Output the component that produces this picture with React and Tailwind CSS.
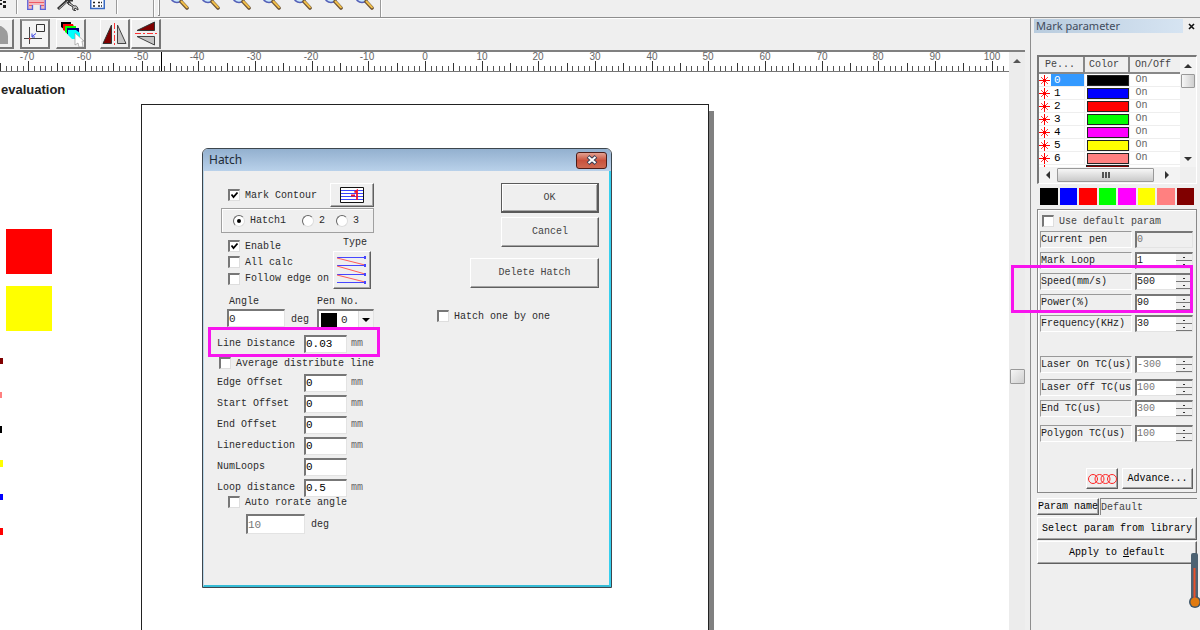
import React from 'react';
import clsx from 'clsx';

const pens = [
  { no: 0, color: 'bg-black' },
  { no: 1, color: 'bg-[#0000ff]' },
  { no: 2, color: 'bg-[#ff0000]' },
  { no: 3, color: 'bg-[#00ff00]' },
  { no: 4, color: 'bg-[#ff00ff]' },
  { no: 5, color: 'bg-[#ffff00]' },
  { no: 6, color: 'bg-[#ff8080]' },
  { no: 7, color: 'bg-[#800000]' },
];

const offsetRows = [
  { id: 'edge', label: 'Edge Offset', value: '0', unit: 'mm' },
  { id: 'start', label: 'Start Offset', value: '0', unit: 'mm' },
  { id: 'end', label: 'End Offset', value: '0', unit: 'mm' },
  { id: 'reduction', label: 'Linereduction', value: '0', unit: 'mm' },
  { id: 'loops', label: 'NumLoops', value: '0', unit: '' },
  { id: 'loopdist', label: 'Loop distance', value: '0.5', unit: 'mm' },
];

const raised = 'bg-[#efefef] border border-t-white border-l-white border-r-[#5f5f5f] border-b-[#5f5f5f] shadow-[inset_-1px_-1px_0_#a5a5a5]';
const sunken = 'border-t-2 border-l-2 border-r border-b border-t-[#777] border-l-[#777] border-r-[#e3e3e3] border-b-[#e3e3e3]';

const Checkbox = ({ label, checked, className }) => (
  <label className={clsx('flex items-center gap-[5px] whitespace-pre', className)}>
    <span className="relative block w-3 h-3 shrink-0">
      <input
        type="checkbox"
        defaultChecked={checked}
        className="peer block appearance-none w-3 h-3 bg-white border-t-2 border-l-2 border-r border-b border-t-[#777] border-l-[#777] border-r-[#dedede] border-b-[#dedede]"
      />
      <svg viewBox="0 0 12 12" className="absolute inset-0 w-3 h-3 hidden peer-checked:block pointer-events-none">
        <path d="M3.5 5.5l2 2.5 4-4.5" fill="none" stroke="#000" strokeWidth="1.8" />
      </svg>
    </span>
    <span className="pt-px">{label}</span>
  </label>
);

const Radio = ({ label, checked, className }) => (
  <label className={clsx('flex items-center gap-[5px]', className)}>
    <span className="relative block w-3 h-3 shrink-0">
      <input
        type="radio"
        name="hatch"
        defaultChecked={checked}
        className="peer block appearance-none w-3 h-3 rounded-full bg-white border border-t-[#666] border-l-[#666] border-r-[#ddd] border-b-[#ddd]"
      />
      <span className="absolute left-1 top-1 w-1 h-1 rounded-full bg-black hidden peer-checked:block" />
    </span>
    {label}
  </label>
);

const Arrow = ({ dir, className }) => {
  const paths = { up: 'M0 6L4 2l4 4z', down: 'M0 2l4 4 4-4z', left: 'M6 0L2 4l4 4z', right: 'M2 0l4 4-4 4z' };
  return (
    <svg viewBox="0 0 8 8" className={clsx('w-2 h-2 fill-[#333]', className)}>
      <path d={paths[dir]} />
    </svg>
  );
};

const Separator = ({ className }) => <div className={clsx('w-[2px] border-l border-[#9a9a9a] bg-white', className)} />;

const Magnifier = () => (
  <svg viewBox="0 0 20 10" className="w-5 h-[10px]">
    <circle cx="8" cy="-4" r="6.500" fill="#c9e8fb" stroke="#5560b8" strokeWidth="1.500" />
    <path d="M12 1.500L18 8" stroke="#6f5535" strokeWidth="3.600" strokeLinecap="round" />
    <path d="M12.500 1.500L18 7.300" stroke="#f3c04a" strokeWidth="1.900" strokeLinecap="round" />
  </svg>
);

const TopToolbar = () => (
  <header className="flex h-[18px] shrink-0 items-start border-b border-[#8e8e8e] bg-[#efefef]">
    <svg viewBox="0 0 16 10" className="w-4 h-[10px]">
      <path d="M0 3h2v2H0zM3 1h3v2H3zM3 5h3v3H3zM0 0h2v1H0z" fill="#222" />
    </svg>
    <Separator className="h-[14px]" />
    <svg viewBox="0 0 20 10" className="w-5 h-[10px] ml-[9px]">
      <path d="M0 0h19v10h-5V5H5v5H0z" fill="#f3b9bd" />
      <path d="M2 2.500h15M2 5.500h4M13 5.500h4" stroke="#ee5a64" />
      <path d="M.75 0v9.500M18.250 0v9.500M5.500 10V5M13.500 10V5M0 9.500h6M13 9.500h6" stroke="#5a64dc" strokeWidth="1.300" />
    </svg>
    <svg viewBox="0 0 24 11" className="w-6 h-[11px] ml-[9px]">
      <path d="M12 0L2 9M9 0h8M11 1l3 3" fill="none" stroke="#333" strokeWidth="3" />
      <path d="M12 1L3 8.500" stroke="#b5b5b5" />
      <path d="M13 2l5 4c2-1 4 1 4 4l-3-2-1 2 2 1c-3 0-4-2-3-4l-5-3z" fill="#ccc" stroke="#333" />
    </svg>
    <svg viewBox="0 0 16 10" className="w-4 h-[10px] ml-[10px]">
      <path d="M.75 -2h13.500V8.500H.75z" fill="#fff" stroke="#3a6cc4" strokeWidth="1.500" />
      <path d="M3 2.500h3M3 6h3M8 2.500h4M8 6h4" stroke="#222" strokeWidth="1.500" strokeDasharray="2 1" />
    </svg>
    <Separator className="h-[14px] ml-[10px]" />
    <Separator className="h-[17px] ml-[35px]" />
    <div className="ml-[3px] w-[2px] h-4 border-r border-b border-[#8e8e8e] bg-white" />
    <div className="ml-[9px] w-[205px] flex justify-between">
      {pens.slice(0, 7).map((p) => <Magnifier key={p.no} />)}
    </div>
    <Separator className="h-[17px] ml-[6px]" />
  </header>
);

const ToolButton = ({ label, pressed, className, children }) => (
  <button
    aria-label={label}
    className={clsx(
      'h-[30px] w-[30px] shrink-0 overflow-hidden',
      pressed
        ? 'bg-[#f4f4f4] border-2 border-[#777] border-t-[#999]'
        : 'bg-[#efefef] border-t border-l border-r-2 border-b-2 border-t-white border-l-white border-r-[#777] border-b-[#777]',
      className
    )}
  >
    {children}
  </button>
);

const DrawToolbar = () => (
  <div className="flex h-[32px] shrink-0 items-start border-t border-white bg-[#efefef]">
    <div className="w-[14px] h-[30px] flex overflow-hidden justify-end">
      <ToolButton label="Shape">
        <svg viewBox="0 0 27 27" className="w-full h-full">
          <path d="M10 6h6q7 4 7 10v8H10z" fill="#9b9b9b" />
        </svg>
      </ToolButton>
    </div>
    <ToolButton label="Put to origin" pressed className="ml-[6px]">
      <svg viewBox="0 0 26 26" className="w-full h-full">
        <path d="M7.500 6v17M2 17.500h18" stroke="#444" />
        <path d="M14.500 3.500h8v7h-8z" fill="none" stroke="#333" />
        <path d="M14 12.500L10 15.500M10 12.500V16h3" fill="none" stroke="#3b45e0" />
        <path d="M7 17h1.500v1.500H7z" fill="#e33" />
      </svg>
    </ToolButton>
    <ToolButton label="Layers" className="ml-[6px]">
      <svg viewBox="0 0 27 27" className="w-full h-full">
        <path d="M4 2h10v4l2 4H8L4 7z" fill="#000" />
        <path d="M6 4h10l2 6-8 2-4-2z" fill="#f00" />
        <path d="M8 6h11v7l-7 2-4-3z" fill="#0f0" />
        <path d="M10 8h12v7h-8l-4-1z" fill="#00007a" />
        <path d="M11 10h8l4 3v6h-8l-4-4z" fill="#0ff" />
        <path d="M18 13v12l3-2 1 4h4l-1-6h2z" fill="#fff" stroke="#999" strokeWidth=".7" />
      </svg>
    </ToolButton>
    <ToolButton label="Mirror horizontally" className="ml-[14px]">
      <svg viewBox="0 0 27 27" className="w-full h-full">
        <path d="M10.500 5v18.500H2z" fill="#800000" stroke="#333" />
        <path d="M16.500 5v18.500H25z" fill="#c4c4c4" stroke="#444" />
        <path d="M13.500 3v22" stroke="#f33" strokeDasharray="6 2 2 2" />
      </svg>
    </ToolButton>
    <ToolButton label="Mirror vertically" className="ml-px">
      <svg viewBox="0 0 27 27" className="w-full h-full">
        <path d="M22.500 2v8.500H5z" fill="#800000" stroke="#333" />
        <path d="M22.500 25v-8.500H5z" fill="#c4c4c4" stroke="#444" />
        <path d="M3 13.500h22" stroke="#f33" strokeDasharray="6 2 2 2" />
      </svg>
    </ToolButton>
  </div>
);

const Ruler = () => {
  const origin = 425;
  const unit = 5.667;
  const ticks = [];
  for (let i = -75; i <= 102; i++) ticks.push(i);
  return (
    <svg className="block w-full h-[20px] shrink-0 overflow-hidden bg-white border-b border-[#777]">
      {ticks.map((i) => {
        const x = Math.round(origin + i * unit) + 0.5;
        const top = i % 10 === 0 ? 9 : i % 5 === 0 ? 11 : 14;
        return <line key={i} x1={x} x2={x} y1={top} y2="19" stroke={i % 5 === 0 ? '#333' : '#555'} />;
      })}
      {ticks.filter((i) => i % 10 === 0).map((i) => (
        <text
          key={i}
          x={Math.round(origin + i * unit) - (i < 0 ? 1 : 0)}
          y="8"
          textAnchor="middle"
          className="text-[10px] fill-[#666] font-['Liberation_Sans',sans-serif]"
        >
          {i}
        </text>
      ))}
      <line x1="161.5" x2="161.5" y1="0" y2="19" stroke="#000" />
    </svg>
  );
};

/* Shapes that sit on the drawing area, left of the work sheet */
const Canvas = () => (
  <div className="relative flex-1 overflow-hidden bg-white">
    <div className="absolute left-px top-[10px] text-[13px] leading-4 font-bold text-[#222] font-['Liberation_Sans',sans-serif]">evaluation</div>
    <div className="absolute left-[709px] top-[39px] bottom-0 w-[5px] bg-[#808080]" />
    <div className="absolute left-[141px] top-[32px] bottom-0 w-[568px] border border-b-0 border-[#222] bg-white" />
    <div className="absolute left-[6px] top-[157px] w-[46px] h-[45px] bg-[#ff0000]" />
    <div className="absolute left-[6px] top-[214px] w-[46px] h-[45px] bg-[#ffff00]" />
    <div className="absolute left-0 top-[286px] w-[3px] h-[6px] bg-[#800000]" />
    <div className="absolute left-0 top-[320px] w-[2px] h-[6px] bg-[#ff8080]" />
    <div className="absolute left-0 top-[354px] w-[2px] h-[7px] bg-black" />
    <div className="absolute left-0 top-[388px] w-[3px] h-[7px] bg-[#ffff00]" />
    <div className="absolute left-0 top-[422px] w-[3px] h-[6px] bg-[#0000ff]" />
    <div className="absolute left-0 top-[456px] w-[3px] h-[7px] bg-[#ff0000]" />
  </div>
);

const DialogButton = ({ className, children }) => (
  <button className={clsx('h-[30px] text-[#444]', className)}>{children}</button>
);

const DistanceRow = ({ row }) => (
  <div className="flex h-[21px] items-center">
    <label htmlFor={row.id} className="w-[87px] pt-px">{row.label}</label>
    <input id={row.id} defaultValue={row.value} className={clsx('w-[43px] h-[18px] bg-white text-[11px] text-black outline-none', sunken)} />
    <span className="ml-1 pt-px text-[#666]">{row.unit}</span>
  </div>
);

const HatchDialog = () => (
  <section
    role="dialog"
    aria-label="Hatch"
    className="absolute left-[202px] top-[148px] w-[410px] rounded-t-md overflow-hidden border border-[#3d464d] bg-[#efefef] font-['Liberation_Mono',monospace] text-[10px] leading-3 text-[#2b2b2b]"
  >
    <div className="flex h-[22px] items-center justify-between bg-linear-to-b from-[#93b0cf] to-[#b9d1ea] pl-[6px] pr-1">
      <h2 className="text-[12px] text-[#1e2a36] font-['Noto_Sans',sans-serif]">Hatch</h2>
      <button aria-label="Close" className="w-[31px] h-[17px] flex items-center justify-center rounded-[3px] border border-[#4d1c17] bg-linear-to-b from-[#e2a192] via-[#c9513c] via-50% to-[#cf6a52]">
        <svg viewBox="0 0 12 10" className="w-3 h-[10px]">
          <path d="M2 1.500l8 7M10 1.500l-8 7" stroke="#3a3f55" strokeWidth="4" />
          <path d="M2.500 2l7 6M9.500 2l-7 6" stroke="#fff" strokeWidth="2" />
        </svg>
      </button>
    </div>

    <div className="flex justify-between border-l border-l-[#bcd8ea] border-r-2 border-b-2 border-r-[#35cfee] border-b-[#35bcd6] pl-[13px] pr-[10px] pt-3 pb-[51px]">
      <div className="w-[157px] whitespace-nowrap">
        <div className="flex h-6 items-center justify-between pl-[11px]">
          <Checkbox label="Mark Contour" checked />
          <button aria-label="Contour mode" className={clsx('w-[44px] h-6 flex items-center justify-center', raised)}>
            <svg viewBox="0 0 24 16" className="w-6 h-4">
              <path d="M.5.5h23v15H.5z" fill="#fff" stroke="#111" />
              <path d="M1 3.500h22M1 6.500h22M1 9.500h22M1 12.500h22" stroke="#3a46ff" />
              <path d="M11 8.500h4M14.500 5.500l2.500-2v9.500" fill="none" stroke="#f01030" strokeWidth="1.800" />
            </svg>
          </button>
        </div>

        <div role="radiogroup" aria-label="Hatch number" className="mt-px ml-1 flex h-[25px] items-center border border-[#a0a0a0] pl-[11px] shadow-[inset_1px_1px_0_#fff]">
          <Radio label="Hatch1" checked />
          <Radio label="2" className="ml-4" />
          <Radio label="3" className="ml-[11px]" />
        </div>

        <div className="mt-[3px] flex justify-between pl-[11px] pr-[3px]">
          <div className="pt-[2px]">
            <Checkbox label="Enable" checked className="h-4" />
            <Checkbox label="All calc" className="h-4" />
            <Checkbox label="Follow edge on" className="h-[17px]" />
          </div>
          <div className="w-[38px]">
            <div className="h-[15px] pl-[10px] pt-px">Type</div>
            <button aria-label="Hatch type" className={clsx('w-[38px] h-[38px] flex items-center justify-center', raised)}>
              <svg viewBox="0 0 32 30" className="w-8 h-[30px]">
                <path d="M1 2.500h29M1 10.500h29M1 19.500h29M1 27.500h29" stroke="#4646ff" />
                <path d="M1 3l28 7M1 11l28 8M1 20l28 7" stroke="#ff5a5a" />
                <path d="M28 1h2v3h-2zM28 9h2v3h-2zM28 18h2v3h-2zM28 26h2v3h-2z" fill="#4646ff" />
              </svg>
            </button>
          </div>
        </div>

        <div className="mt-1 flex items-start pl-[10px]">
          <div className="w-[58px]">
            <label htmlFor="angle" className="flex h-4 items-center pl-[2px] pt-px">Angle</label>
            <input id="angle" defaultValue="0" className={clsx('block w-full h-[18px] bg-white text-[11px] outline-none', sunken)} />
          </div>
          <span className="ml-[6px] mt-[21px] w-[26px]">deg</span>
          <div className="w-[57px]">
            <label htmlFor="pen" className="flex h-4 items-center pt-px">Pen No.</label>
            <div className="relative">
              <select id="pen" className={clsx('block appearance-none w-full h-5 bg-white pl-[22px] text-[11px] outline-none', sunken)}>
                <option>0</option>
              </select>
              <span className="absolute left-1 top-1 w-4 h-[14px] bg-black pointer-events-none" />
              <span className="absolute right-px top-[2px] flex w-[15px] h-[17px] items-center justify-center bg-[#f4f4f4] border-l border-[#ddd] pointer-events-none">
                <Arrow dir="down" className="fill-black" />
              </span>
            </div>
          </div>
        </div>

        <div className="relative mt-1">
          <DistanceRow row={{ id: 'linedist', label: 'Line Distance', value: '0.03', unit: 'mm' }} />
          <Checkbox label="Average distribute line" className="h-[18px] pl-[2px]" />
          <div className="absolute -left-[9px] -right-[6px] -top-[6px] h-[30px] border-3 border-[#f814ee] pointer-events-none" />
        </div>

        {offsetRows.map((row) => <DistanceRow key={row.id} row={row} />)}

        <Checkbox label="Auto rorate angle" className="h-4 -mt-1 pl-[11px]" />
        <div className="mt-1 flex items-center pl-[29px]">
          <input aria-label="Auto rorate angle value" defaultValue="10" className={clsx('w-[59px] h-5 bg-white text-[11px] text-[#777] outline-none', sunken)} />
          <span className="ml-[6px] pt-[2px]">deg</span>
        </div>
      </div>

      <div className="flex w-[162px] flex-col items-end">
        <DialogButton className="w-[98px] bg-[#efefef] border border-r-2 border-b-2 border-[#5a5a5a] shadow-[inset_1px_1px_0_#fff,inset_-1px_-1px_0_#aaa]">OK</DialogButton>
        <DialogButton className={clsx('mt-1 w-[98px]', raised)}>Cancel</DialogButton>
        <DialogButton className={clsx('mt-[11px] w-[129px]', raised)}>Delete Hatch</DialogButton>
        <Checkbox label="Hatch one by one" className="mt-5 h-4 self-start" />
      </div>
    </div>
  </section>
);

const PenStar = () => (
  <svg viewBox="0 0 11 11" className="w-[11px] h-[11px]">
    <path d="M5.500 0v11M0 5.500h11" stroke="#f00" />
    <path d="M2 2l7 7M9 2l-7 7" stroke="#f44" />
    <path d="M4 4h3v3H4z" fill="#f00" />
  </svg>
);

const PenList = () => (
  <div className="border-t-2 border-l-2 border-r border-b border-t-[#777] border-l-[#777] border-r-white border-b-white bg-[#efefef]">
    <div className="flex h-[110px]">
      <div className="flex-1 overflow-hidden bg-white">
        <table className="w-full table-fixed border-collapse text-[#444]">
          <thead>
            <tr className="h-4 bg-[#efefef] text-left">
              <th className="w-[45px] h-4 border-r-2 border-b-2 border-[#888] p-0 pl-[6px] font-normal">Pe...</th>
              <th className="w-[45px] border-r-2 border-b-2 border-[#888] p-0 pl-1 font-normal">Color</th>
              <th className="border-b-2 border-[#888] p-0 pl-[5px] font-normal">On/Off</th>
            </tr>
          </thead>
          <tbody>
            {pens.slice(0, 7).map((pen) => (
              <tr key={pen.no} className="h-[13px]">
                <td className="h-[13px] border-r border-b border-[#eee] p-0">
                  <div className="flex h-3 items-center">
                    <PenStar />
                    <span className={clsx('ml-px flex-1 h-3 pl-[3px] text-[11px]', pen.no === 0 ? 'bg-[#3399ff] text-white' : 'text-black')}>{pen.no}</span>
                  </div>
                </td>
                <td className="border-r border-b border-[#eee] p-0 pl-[2px]">
                  <div className={clsx('h-[11px] border border-[#222]', pen.color)} />
                </td>
                <td className="border-b border-[#eee] p-0 pl-[6px] text-[#666]">On</td>
              </tr>
            ))}
          </tbody>
        </table>
        {/* top edge of the next row */}
        <div className="flex">
          <div className="w-[47px]"><PenStar /></div>
          <div className="w-[43px] h-[11px] border border-[#222] bg-[#800000]" />
        </div>
      </div>
      <div className="flex w-4 flex-col items-center bg-[#f3f3f3]">
        <div className="flex h-[17px] items-center"><Arrow dir="up" /></div>
        <div className="w-[14px] h-[14px] border border-[#999] rounded-[1px] bg-linear-to-r from-[#f6f6f6] to-[#cfcfcf]" />
        <div className="mt-auto flex h-[17px] items-center"><Arrow dir="down" /></div>
      </div>
    </div>
    <div className="mr-4 flex h-4 items-center bg-[#f3f3f3]">
      <div className="flex w-[18px] justify-center"><Arrow dir="left" /></div>
      <div className="flex h-[14px] flex-1 items-center justify-center gap-px rounded-[1px] border border-[#999] bg-linear-to-b from-[#f6f6f6] to-[#cacaca]">
        <span className="w-[2px] h-[6px] bg-[#555]" />
        <span className="w-[2px] h-[6px] bg-[#555]" />
        <span className="w-[2px] h-[6px] bg-[#555]" />
      </div>
      <div className="flex w-[26px] justify-center"><Arrow dir="right" /></div>
    </div>
  </div>
);

const ParamRow = ({ id, label, value, readOnly, muted, className }) => (
  <div className={clsx('flex h-[17px] gap-[3px]', className)}>
    <label htmlFor={id} className="w-[92px] h-[17px] shrink-0 flex items-center whitespace-nowrap border border-t-[#999] border-l-[#999] border-r-white border-b-white pt-px text-[#222]">
      {label}
    </label>
    <div className={clsx('flex min-w-0 flex-1', sunken, readOnly ? 'bg-[#efefef]' : 'bg-white')}>
      <input id={id} defaultValue={value} readOnly={readOnly} className={clsx('w-0 min-w-0 flex-1 bg-transparent outline-none', muted ? 'text-[#777]' : 'text-[#222]')} />
      {!readOnly && (
        <div className="flex w-4 shrink-0 flex-col">
          <button aria-label={`${label} up`} className="flex flex-1 items-center justify-center bg-[#efefef] border-b border-[#777]"><span className="w-[2px] h-px bg-[#333]" /></button>
          <button aria-label={`${label} down`} className="flex flex-1 items-center justify-center bg-[#efefef] border-b border-[#777]"><span className="w-[2px] h-px bg-[#333]" /></button>
        </div>
      )}
    </div>
  </div>
);

const MarkParameterPanel = () => (
  <aside className="w-[170px] shrink-0 border-l border-[#8e8e8e] bg-[#efefef] font-['Liberation_Mono',monospace] text-[10px] leading-3">
    <div className="flex items-center pl-[3px] pt-px">
      <h2 className="h-[14px] w-[149px] bg-linear-to-r from-[#b9ccde] to-[#d6e4f2] pl-[2px] text-[11px] leading-[14px] text-[#3f4b5c] font-['Noto_Sans',sans-serif]">Mark parameter</h2>
      <button aria-label="Close panel" className="flex flex-1 justify-center">
        <svg viewBox="0 0 7 7" className="w-[7px] h-[7px]">
          <path d="M1 1l5 5M6 1L1 6" stroke="#111" strokeWidth="1.600" />
        </svg>
      </button>
    </div>

    <div className="pl-[6px] pr-[3px] pt-[22px]">
      <PenList />

      <div className="mt-1 flex gap-[2px] px-[3px]">
        {pens.map((pen) => (
          <button key={pen.no} aria-label={`Pen ${pen.no}`} className={clsx('h-[17px] flex-1', pen.color)} />
        ))}
      </div>

      {/* Speed and Power rows are marked with the pink frame */}
      <div className="relative mt-1 border border-[#888] shadow-[inset_1px_1px_0_#fff] pl-[2px] pr-[3px] pt-px pb-[3px]">
        <Checkbox label="Use default param" className="h-5 pl-[2px] text-[#444]" />
        <div className="flex flex-col gap-1">
          <ParamRow id="current" label="Current pen" value="0" readOnly muted />
          <ParamRow id="loop" label="Mark Loop" value="1" />
          <ParamRow id="speed" label="Speed(mm/s)" value="500" />
          <ParamRow id="power" label="Power(%)" value="90" />
          <ParamRow id="freq" label="Frequency(KHz)" value="30" />
          <ParamRow id="laseron" label="Laser On TC(us)" value="-300" muted className="mt-5" />
          <ParamRow id="laseroff" label="Laser Off TC(us" value="100" muted className="mt-[2px]" />
          <ParamRow id="endtc" label="End TC(us)" value="300" muted />
          <ParamRow id="polytc" label="Polygon TC(us)" value="100" muted className="mt-1" />
        </div>
        <div className="mt-[26px] flex justify-end gap-1">
          <button aria-label="Wobble" className={clsx('w-8 h-[21px] flex items-center justify-center', raised)}>
            <svg viewBox="0 0 29 12" className="w-[29px] h-3">
              <g fill="none" stroke="#f22">
                <circle cx="5" cy="6" r="4.500" />
                <circle cx="11.500" cy="6" r="4.500" />
                <circle cx="17.500" cy="6" r="4.500" />
                <circle cx="24" cy="6" r="4.500" />
              </g>
            </svg>
          </button>
          <button className={clsx('w-[71px] h-[21px]', raised)}>Advance...</button>
        </div>
        <div className="absolute -left-[27px] right-[3px] top-[55px] h-[48px] border-3 border-[#f814ee] pointer-events-none" />
      </div>

      <div className="mt-[5px] flex gap-px">
        <button className={clsx('w-[62px] h-[17px] whitespace-nowrap', raised)}>Param name</button>
        <input aria-label="Param name value" defaultValue="Default" className="min-w-0 flex-1 h-[17px] bg-[#efefef] border-t border-l border-[#888] text-[#444] outline-none" />
      </div>
      <button className={clsx('mt-[2px] w-full h-[23px] whitespace-nowrap', raised)}>Select param from library</button>
      <button className={clsx('mt-px block w-full h-[23px]', raised)}>Apply to <u>d</u>efault</button>
    </div>
  </aside>
);

const MainScrollbar = () => (
  <div className="flex w-4 shrink-0 flex-col items-center bg-[#ececec]">
    <div className="flex h-[17px] items-center"><Arrow dir="up" className="fill-[#555]" /></div>
    <div className="grow-[11]" />
    <div className="w-[15px] h-[15px] border border-[#999] rounded-[1px] bg-linear-to-br from-[#f6f6f6] to-[#cfcfcf]" />
    <div className="grow-[9]" />
  </div>
);

const App = () => (
  <div className="relative flex h-screen flex-col overflow-hidden bg-[#efefef]">
    <TopToolbar />
    <div className="flex min-h-0 flex-1">
      <main className="flex min-w-0 flex-1 flex-col">
        <DrawToolbar />
        <div className="mr-[5px] flex min-h-0 flex-1 border-t-2 border-[#808080]">
          <div className="flex min-w-0 flex-1 flex-col">
            <Ruler />
            <Canvas />
          </div>
          <MainScrollbar />
        </div>
      </main>
      <MarkParameterPanel />
    </div>

    <HatchDialog />

    <svg viewBox="0 0 12 56" className="absolute right-0 top-[553px] w-3 h-14">
      <rect x="3" y="0" width="7" height="46" rx="2" fill="#4d6272" />
      <circle cx="7" cy="49" r="6" fill="#3d5568" />
      <circle cx="7" cy="49" r="4.500" fill="#e07a10" />
      <path d="M6.500 15v30" stroke="#e8502a" strokeWidth="2" />
    </svg>
  </div>
);

export default App;
